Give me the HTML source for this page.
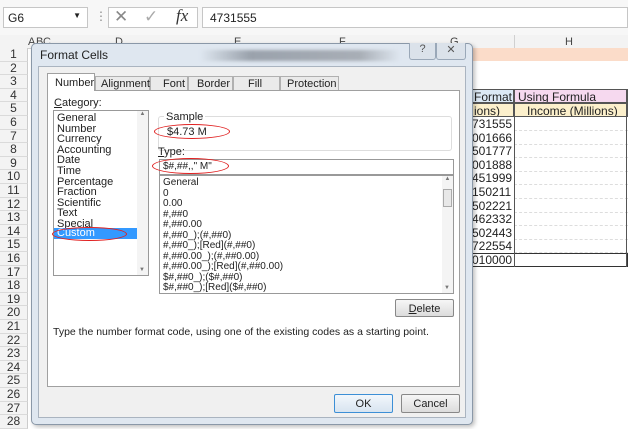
<!DOCTYPE html><html><head><style>
*{margin:0;padding:0;box-sizing:border-box}
body{width:628px;height:428px;overflow:hidden;background:#fff;font-family:"Liberation Sans",sans-serif;font-size:11px;color:#222;position:relative}
.a{position:absolute}
.rn{position:absolute;left:0;width:28px;text-align:center;font-size:12px;color:#333;background:#f3f3f3;border-bottom:1px solid #dadada;border-right:1px solid #ccc}
.cell{position:absolute;font-size:11px;white-space:nowrap;overflow:hidden}
</style></head><body>
<div class="a" style="left:0;top:0;width:628px;height:36px;background:#f7f7f7"></div>
<div class="a" style="left:3px;top:7px;width:85px;height:21px;background:#fff;border:1px solid #c6c6c6;font-size:12px;padding:3px 4px">G6<span style="position:absolute;right:6px;top:3px;font-size:8px">▼</span></div>
<div class="a" style="left:95px;top:9px;color:#888;font-size:12px">⋮</div>
<div class="a" style="left:108px;top:7px;width:90px;height:21px;background:#fff;border:1px solid #c6c6c6"></div>
<div class="a" style="left:114px;top:7px;color:#888;font-size:17px">✕</div>
<div class="a" style="left:144px;top:7px;color:#aaa;font-size:17px">✓</div>
<div class="a" style="left:176px;top:6px;color:#333;font-size:17px;font-family:'Liberation Serif',serif;font-style:italic">fx</div>
<div class="a" style="left:202px;top:7px;width:426px;height:21px;background:#fff;border:1px solid #c6c6c6;font-size:12px;padding:3px 7px">4731555</div>
<div class="a" style="left:0;top:35px;width:628px;height:14px;background:#f3f3f3;border-bottom:1px solid #d0d0d0;font-size:11px;color:#444">
<span class="a" style="left:28px;top:1px">A</span><span class="a" style="left:36px;top:1px">B</span><span class="a" style="left:43px;top:1px">C</span>
<span class="a" style="left:115px;top:1px">D</span><span class="a" style="left:234px;top:1px">E</span><span class="a" style="left:339px;top:1px">F</span><span class="a" style="left:450px;top:1px">G</span><span class="a" style="left:565px;top:1px">H</span>
<span class="a" style="left:514px;top:0;width:1px;height:14px;background:#d0d0d0"></span></div>
<div id="rows"></div>
<script>
var h='';for(var i=1;i<=28;i++){var t=48+(i-1)*13.6;h+='<div class="rn" style="top:'+t+'px;height:13.6px;line-height:13px">'+i+'</div>';}
document.getElementById('rows').innerHTML=h;
</script>
<div class="a" style="left:470px;top:48px;width:158px;height:13px;background:#fbdcc9"></div>
<div class="cell" style="left:470px;top:89px;width:44px;height:14px;background:#dce9f5;border:1px solid #555;font-size:12px;padding-left:3px">Format</div>
<div class="cell" style="left:514px;top:89px;width:114px;height:14px;background:#f6d9ef;border:1px solid #555;font-size:12px;padding-left:3px">Using Formula</div>
<div class="cell" style="left:470px;top:103px;width:44px;height:14px;background:#fcf0cc;border:1px solid #555;font-size:12px;padding-left:3px">ions)</div>
<div class="cell" style="left:514px;top:103px;width:114px;height:14px;background:#fcf0cc;border:1px solid #555;font-size:12px;padding-left:12px">Income (Millions)</div>
<div id="vals"></div>
<script>
var v=['731555','001666','501777','001888','451999','150211','502221','462332','502443','722554','010000'];var h2='';
for(var i=0;i<11;i++){var t=117+i*13.6;h2+='<div class="cell" style="left:472px;top:'+t+'px;font-size:12px">'+v[i]+'</div><div class="a" style="left:514px;top:'+(t+13)+'px;width:114px;border-top:1px dashed #ddd"></div>';}
document.getElementById('vals').innerHTML=h2;
</script>
<div class="a" style="left:470px;top:253px;width:158px;height:14px;border:1px solid #333;border-left:none"></div>
<div class="a" style="left:514px;top:253px;width:1px;height:14px;background:#555"></div>
<div class="a" style="left:514px;top:117px;width:1px;height:136px;background:#555"></div>
<div class="a" style="left:626px;top:89px;width:1px;height:178px;background:#555"></div>
<div class="a" style="left:31px;top:43px;width:442px;height:382px;background:#dfe7f0;border:1px solid #8a98a8;border-radius:5px;box-shadow:2px 2px 4px rgba(0,0,0,.25)"></div>
<div class="a" style="left:40px;top:48px;font-size:12px;color:#222">Format Cells</div>
<div class="a" style="left:200px;top:50px;width:200px;height:11px;background:linear-gradient(90deg,rgba(223,231,240,0),#9aa2ac 25%,#a8aeb6 80%,rgba(223,231,240,0));filter:blur(1.5px)"></div>
<div class="a" style="left:409px;top:43px;width:27px;height:17px;border:1px solid #9aa8b8;border-top:none;border-radius:0 0 3px 3px;background:#dbe2ea;text-align:center;font-size:11px;color:#555">?</div>
<div class="a" style="left:436px;top:43px;width:30px;height:17px;border:1px solid #9aa8b8;border-top:none;border-radius:0 0 3px 3px;background:#dbe2ea;text-align:center;font-size:11px;color:#555">✕</div>
<div class="a" style="left:38px;top:66px;width:428px;height:352px;background:#f0f0f0;border:1px solid #aab4c0"></div>
<div class="a" style="left:47px;top:90px;width:413px;height:297px;background:#fff;border:1px solid #a0a0a0"></div>
<div class="a" style="left:47px;top:73px;width:48px;height:18px;background:#fff;border:1px solid #a0a0a0;border-bottom:none;font-size:11px;padding:3px 0 0 7px">Number</div>
<div class="a" style="left:95px;top:76px;width:55px;height:14px;background:#eaeaea;border:1px solid #b0b0b0;border-bottom:none;padding:1px 5px">Alignment</div>
<div class="a" style="left:150px;top:76px;width:38px;height:14px;background:#eaeaea;border:1px solid #b0b0b0;border-bottom:none;padding:1px 0 0 12px">Font</div>
<div class="a" style="left:188px;top:76px;width:45px;height:14px;background:#eaeaea;border:1px solid #b0b0b0;border-bottom:none;padding:1px 0 0 8px">Border</div>
<div class="a" style="left:233px;top:76px;width:47px;height:14px;background:#eaeaea;border:1px solid #b0b0b0;border-bottom:none;padding:1px 0 0 14px">Fill</div>
<div class="a" style="left:280px;top:76px;width:59px;height:14px;background:#eaeaea;border:1px solid #b0b0b0;border-bottom:none;padding:1px 0 0 6px">Protection</div>
<div class="a" style="left:54px;top:97px"><u>C</u>ategory:</div>
<div class="a" style="left:53px;top:110px;width:96px;height:166px;border:1px solid #999;background:#fff;line-height:10.6px;padding:2px 0 0 3px;font-size:11px">General<br>Number<br>Currency<br>Accounting<br>Date<br>Time<br>Percentage<br>Fraction<br>Scientific<br>Text<br>Special</div>
<div class="a" style="left:54px;top:228px;width:83px;height:11px;background:#3399ff;color:#fff;padding-left:3px;line-height:11px">Custom</div>
<div class="a" style="left:52px;top:227px;width:75px;height:14px;border:1.5px solid #e02020;border-radius:50%"></div>
<div class="a" style="left:137px;top:111px;width:11px;height:164px;background:#f4f4f4;font-size:6px;color:#777;text-align:center">▲<div style="position:absolute;bottom:2px;left:2px">▼</div></div>
<div class="a" style="left:158px;top:116px;width:294px;height:35px;border:1px solid #ddd;border-radius:3px"></div>
<div class="a" style="left:164px;top:111px;background:#fff;padding:0 2px">Sample</div>
<div class="a" style="left:167px;top:126px">$4.73 M</div>
<div class="a" style="left:154px;top:124px;width:76px;height:15px;border:1.5px solid #e02020;border-radius:50%"></div>
<div class="a" style="left:158px;top:146px"><u>T</u>ype:</div>
<div class="a" style="left:159px;top:159px;width:295px;height:16px;border:1px solid #999;padding:1px 0 0 3px;font-size:10px">$#,##,," M"</div>
<div class="a" style="left:152px;top:158px;width:77px;height:16px;border:1.5px solid #e02020;border-radius:50%"></div>
<div class="a" style="left:159px;top:175px;width:295px;height:119px;border:1px solid #999;background:#fff;padding:2px 0 0 3px;font-size:10px;line-height:10.5px">General<br>0<br>0.00<br>#,##0<br>#,##0.00<br>#,##0_);(#,##0)<br>#,##0_);[Red](#,##0)<br>#,##0.00_);(#,##0.00)<br>#,##0.00_);[Red](#,##0.00)<br>$#,##0_);($#,##0)<br>$#,##0_);[Red]($#,##0)</div>
<div class="a" style="left:442px;top:176px;width:11px;height:117px;background:#f4f4f4;font-size:6px;color:#777;text-align:center">▲<div style="position:absolute;top:13px;left:1px;width:9px;height:18px;border:1px solid #aaa;background:#e8e8e8"></div><div style="position:absolute;bottom:2px;left:2px">▼</div></div>
<div class="a" style="left:395px;top:299px;width:59px;height:18px;border:1px solid #888;border-radius:2px;background:linear-gradient(#f6f6f6,#dcdcdc);text-align:center;padding-top:3px"><u>D</u>elete</div>
<div class="a" style="left:53px;top:326px;font-size:10.5px">Type the number format code, using one of the existing codes as a starting point.</div>
<div class="a" style="left:334px;top:394px;width:59px;height:19px;border:1px solid #3c8fd6;border-radius:2px;background:linear-gradient(#f2f7fc,#d8e4f0);text-align:center;padding-top:3px">OK</div>
<div class="a" style="left:401px;top:394px;width:59px;height:19px;border:1px solid #888;border-radius:2px;background:linear-gradient(#f6f6f6,#dcdcdc);text-align:center;padding-top:3px">Cancel</div>
</body></html>
